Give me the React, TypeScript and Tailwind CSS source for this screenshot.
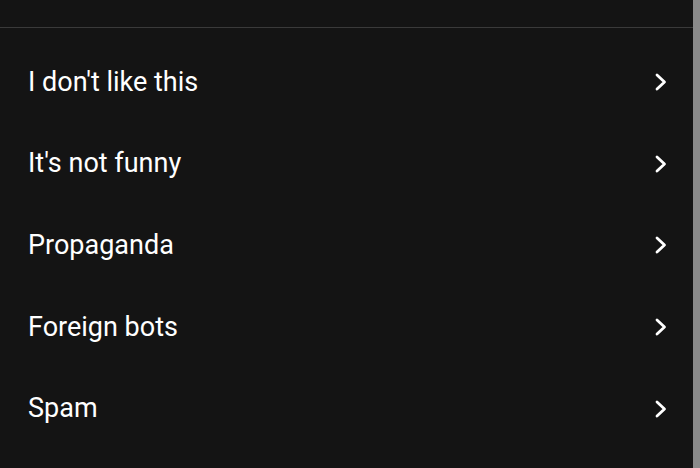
import React from "react";

const items = ["I don't like this", "It's not funny", "Propaganda", "Foreign bots", "Spam"];

function Chevron() {
  return (
    <svg width="14" height="18" viewBox="0 0 14 18" fill="none">
      <path d="M3 2 L10.5 9 L3 16" stroke="white" strokeWidth="2.8" strokeLinecap="round" strokeLinejoin="round" />
    </svg>
  );
}

export default function App() {
  return (
    <div className="flex h-[468px] w-[700px] bg-[#141414]" style={{ fontFamily: "Roboto, 'Noto Sans', sans-serif" }}>
      <div className="flex flex-1 flex-col">
        <div className="h-[28px] border-b border-[#3a3a3a]" />
        <div className="flex flex-col pt-[13px]">
          {items.map((t) => (
            <div key={t} className="flex h-[81.7px] items-center justify-between pl-[28px] pr-[25px]">
              <span className="text-[27px] text-white">{t}</span>
              <Chevron />
            </div>
          ))}
        </div>
      </div>
      <div className="w-[7px] bg-[#8a8a8a]" />
    </div>
  );
}
